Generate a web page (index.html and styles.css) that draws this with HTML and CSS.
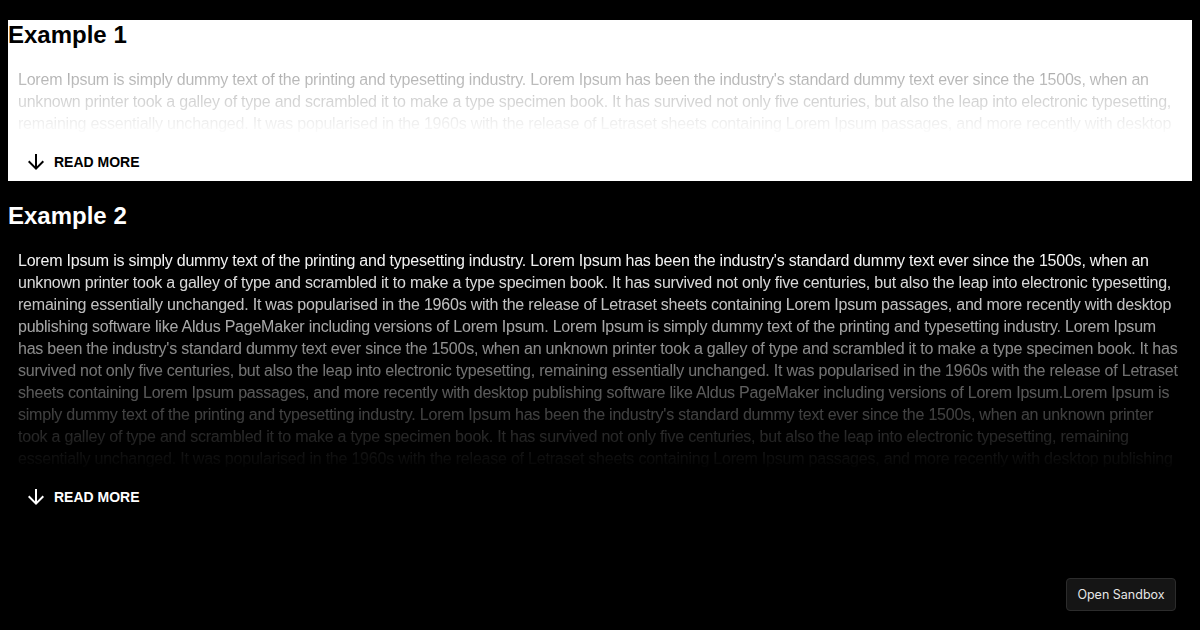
FILE: index.html
```html
<!DOCTYPE html>
<html lang="en">
<head>
    <meta charset="UTF-8">
    <meta name="viewport" content="width=device-width, initial-scale=1.0">
    <title>Read more</title>
    <link rel="stylesheet" href="styles.css">
</head>
<body>
    <div class="example example-light">
        <h2>Example 1</h2>
        <div class="collapse collapse-short">
            <p class="lorem">Lorem Ipsum is simply dummy text of the printing and typesetting industry. Lorem Ipsum has been the industry's standard dummy text ever since the 1500s, when an unknown printer took a galley of type and scrambled it to make a type specimen book. It has survived not only five centuries, but also the leap into electronic typesetting, remaining essentially unchanged. It was popularised in the 1960s with the release of Letraset sheets containing Lorem Ipsum passages, and more recently with desktop publishing software like Aldus PageMaker including versions of Lorem Ipsum.</p>
        </div>
        <div class="actions">
            <button class="read-more" type="button">
                <svg class="icon" viewBox="0 0 24 24" aria-hidden="true"><path d="M20 12l-1.41-1.41L13 16.17V4h-2v12.17l-5.58-5.59L4 12l8 8 8-8z"/></svg>
                Read more
            </button>
        </div>
    </div>

    <div class="example example-dark">
        <h2>Example 2</h2>
        <div class="collapse collapse-long">
            <p class="lorem">Lorem Ipsum is simply dummy text of the printing and typesetting industry. Lorem Ipsum has been the industry's standard dummy text ever since the 1500s, when an unknown printer took a galley of type and scrambled it to make a type specimen book. It has survived not only five centuries, but also the leap into electronic typesetting, remaining essentially unchanged. It was popularised in the 1960s with the release of Letraset sheets containing Lorem Ipsum passages, and more recently with desktop publishing software like Aldus PageMaker including versions of Lorem Ipsum. Lorem Ipsum is simply dummy text of the printing and typesetting industry. Lorem Ipsum has been the industry's standard dummy text ever since the 1500s, when an unknown printer took a galley of type and scrambled it to make a type specimen book. It has survived not only five centuries, but also the leap into electronic typesetting, remaining essentially unchanged. It was popularised in the 1960s with the release of Letraset sheets containing Lorem Ipsum passages, and more recently with desktop publishing software like Aldus PageMaker including versions of Lorem Ipsum.Lorem Ipsum is simply dummy text of the printing and typesetting industry. Lorem Ipsum has been the industry's standard dummy text ever since the 1500s, when an unknown printer took a galley of type and scrambled it to make a type specimen book. It has survived not only five centuries, but also the leap into electronic typesetting, remaining essentially unchanged. It was popularised in the 1960s with the release of Letraset sheets containing Lorem Ipsum passages, and more recently with desktop publishing software like Aldus PageMaker including versions of Lorem Ipsum.</p>
        </div>
        <div class="actions">
            <button class="read-more" type="button">
                <svg class="icon" viewBox="0 0 24 24" aria-hidden="true"><path d="M20 12l-1.41-1.41L13 16.17V4h-2v12.17l-5.58-5.59L4 12l8 8 8-8z"/></svg>
                Read more
            </button>
        </div>
    </div>

    <button class="sandbox-btn" type="button">Open Sandbox</button>
</body>
</html>
```

FILE: styles.css
```css
body {
    margin: 0;
    padding: 0 8px;
    background: #000;
    font-family: "Liberation Sans", Arial, Helvetica, sans-serif;
}

.example {
    margin-top: 20px;
}

h2 {
    margin: 0 0 20px;
    padding-top: 1px;
    font-size: 24px;
    font-weight: bold;
}

.example-light {
    background: #fff;
    color: #000;
}

.example-dark {
    color: #fff;
}

/* collapsed text, faded out towards the bottom */
.collapse {
    padding: 0 10px;
    overflow: hidden;
}

.collapse-short {
    height: 66px;
    -webkit-mask-image: linear-gradient(to bottom, rgba(0, 0, 0, 0.34), rgba(0, 0, 0, 0));
    mask-image: linear-gradient(to bottom, rgba(0, 0, 0, 0.34), rgba(0, 0, 0, 0));
}

.collapse-long {
    height: 220px;
    -webkit-mask-image: linear-gradient(to bottom, #000, rgba(0, 0, 0, 0));
    mask-image: linear-gradient(to bottom, #000, rgba(0, 0, 0, 0));
}

.lorem {
    margin: 0;
    font-size: 16px;
    line-height: 22px;
    letter-spacing: -0.22px;
}

.actions {
    margin-top: 9px;
    padding-left: 8px;
}

.read-more {
    display: inline-flex;
    align-items: center;
    gap: 6px;
    padding: 6px 8px;
    border: none;
    background: transparent;
    color: inherit;
    font-family: inherit;
    font-size: 14px;
    font-weight: bold;
    line-height: 24.5px;
    text-transform: uppercase;
    cursor: pointer;
}

.icon {
    width: 24px;
    height: 24px;
    fill: currentColor;
}

.sandbox-btn {
    position: fixed;
    right: 24px;
    bottom: 19px;
    width: 110px;
    height: 33px;
    padding: 0;
    background: #151515;
    border: 1px solid #2c2c2c;
    border-radius: 4px;
    color: #e6e6e6;
    font-family: Inter, "Liberation Sans", sans-serif;
    font-size: 12.5px;
    cursor: pointer;
}
```
